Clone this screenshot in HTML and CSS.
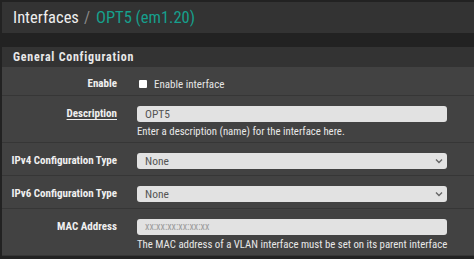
FILE: index.html
```html
<!DOCTYPE html>
<html>
<head>
<meta charset="utf-8">
<link rel="stylesheet" href="styles.css">
</head>
<body>
<div class="page">
  <div class="header">
    <h1 class="crumbs"><span class="crumb">Interfaces</span><span class="sep">/</span><span class="current">OPT5 (em1.20)</span></h1>
  </div>
  <div class="panel">
    <div class="panel-heading">General Configuration</div>
    <div class="panel-body">
      <div class="row row-enable">
        <div class="label">Enable</div>
        <div class="control"><label class="check"><span class="box"></span>Enable interface</label></div>
      </div>
      <div class="row row-help">
        <div class="label"><span class="under">Description</span></div>
        <div class="control">
          <div class="input">OPT5</div>
          <div class="help">Enter a description (name) for the interface here.</div>
        </div>
      </div>
      <div class="row">
        <div class="label">IPv4 Configuration Type</div>
        <div class="control"><div class="input select">None<svg class="chev" width="8" height="6" viewBox="0 0 8 6"><path d="M1 1.5 L4 4.5 L7 1.5" fill="none" stroke="#666" stroke-width="1.4"/></svg></div></div>
      </div>
      <div class="row">
        <div class="label">IPv6 Configuration Type</div>
        <div class="control"><div class="input select">None<svg class="chev" width="8" height="6" viewBox="0 0 8 6"><path d="M1 1.5 L4 4.5 L7 1.5" fill="none" stroke="#666" stroke-width="1.4"/></svg></div></div>
      </div>
      <div class="row row-help">
        <div class="label">MAC Address</div>
        <div class="control">
          <div class="input placeholder">xx:xx:xx:xx:xx:xx</div>
          <div class="help">The MAC address of a VLAN interface must be set on its parent interface</div>
        </div>
      </div>
    </div>
  </div>
</div>
</body>
</html>
```
FILE: styles.css
```css
html, body {
  margin: 0;
  padding: 0;
  background: #222222;
}
body {
  font-family: "Liberation Sans Narrow", "Roboto Condensed", "DejaVu Sans Condensed", Roboto, sans-serif;
  width: 474px;
  height: 259px;
  overflow: hidden;
}
.page {
  padding: 2px 0 0 2px;
}
.header {
  background: #333333;
  height: 31px;
  display: flex;
  align-items: center;
  padding-left: 11px;
}
.crumbs {
  margin: 0;
  font-size: 16.5px;
  font-weight: 400;
  display: flex;
  align-items: baseline;
}
.crumb { color: #eeeeee; }
.sep { color: #8a8a8a; margin: 0 6px 0 5px; }
.current { color: #16a08d; }
.panel {
  margin-top: 14px;
}
.panel-heading {
  background: #333333;
  height: 20px;
  line-height: 21px;
  padding-left: 11px;
  color: #e8e8e8;
  font-weight: 700;
  font-size: 12px;
  letter-spacing: 0.75px;
}
.panel-body {
  background: #424242;
}
.row {
  display: grid;
  grid-template-columns: 115px 310px;
  column-gap: 20px;
  border-bottom: 1px solid #363636;
  padding: 10px 0 6px 0;
}
.row-enable {
  padding: 9px 0 3px 0;
}
.row-help {
  padding: 10px 0 2px 0;
}
.label {
  text-align: right;
  color: #f0f0f0;
  font-weight: 700;
  font-size: 11px;
  line-height: 16px;
  white-space: nowrap;
}
.under {
  text-decoration: underline;
  text-underline-offset: 2px;
}
.control {
  color: #e6e6e6;
  font-size: 11px;
}
.check {
  display: flex;
  align-items: center;
  height: 16px;
  padding-left: 2px;
  font-size: 11px;
}
.box {
  width: 8px;
  height: 8px;
  background: #ffffff;
  border-radius: 1px;
  margin-right: 7px;
}
.input {
  background: #e2e2e2;
  border-radius: 3px;
  height: 16px;
  line-height: 16px;
  padding-left: 8px;
  color: #555555;
  font-size: 11.5px;
  position: relative;
}
.placeholder {
  color: #9a9a9a;
  font-size: 10px;
}
.chev {
  position: absolute;
  right: 4px;
  top: 5px;
}
.help {
  margin-top: 2px;
  line-height: 16px;
  color: #e8e8e8;
  font-size: 10.8px;
  white-space: nowrap;
}
```
